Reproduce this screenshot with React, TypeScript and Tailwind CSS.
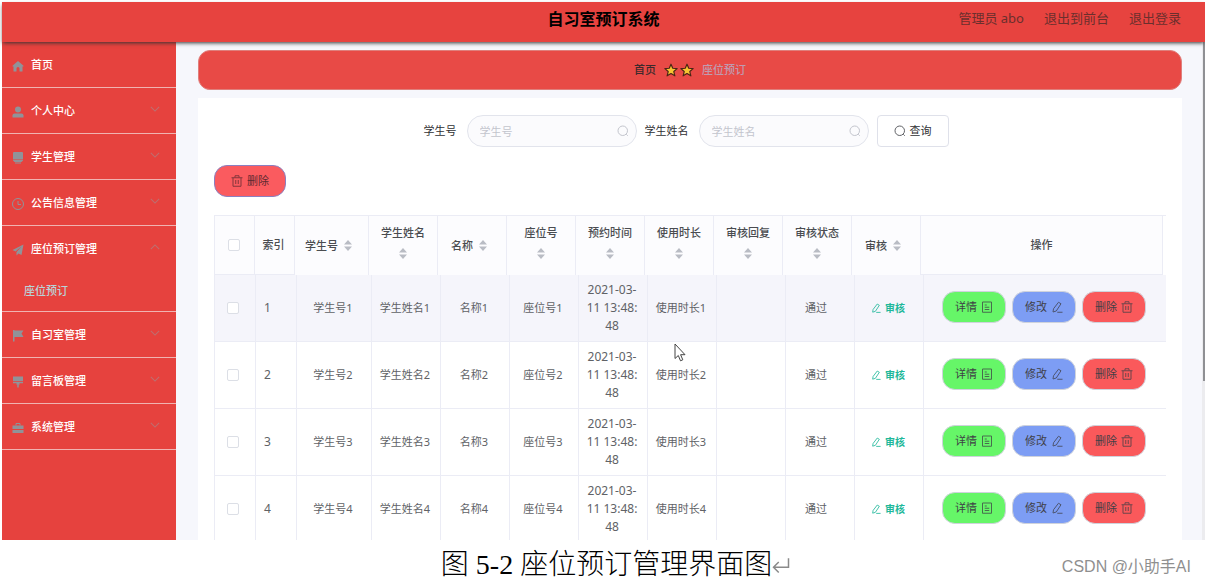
import { useState, type ReactNode } from "react";
import clsx from "clsx";

type IconProps = { className?: string };

function Icon({ className, children }: IconProps & { children: ReactNode }) {
  return (
    <svg
      viewBox="0 0 24 24"
      aria-hidden="true"
      fill="none"
      stroke="currentColor"
      className={clsx("shrink-0", className)}
    >
      {children}
    </svg>
  );
}

const menuIcons: Record<string, ReactNode> = {
  home: (
    <path d="M12 2 1 11.500V13h2v10h6v-6a3 3 0 0 1 6 0v6h6V13h2v-1.500z" fill="currentColor" stroke="none" />
  ),
  user: (
    <g fill="currentColor" stroke="none">
      <circle cx="12" cy="7" r="6" />
      <path d="M1 23v-4a4 4 0 0 1 4-4h14a4 4 0 0 1 4 4v4z" />
    </g>
  ),
  platform: (
    <g fill="currentColor" stroke="none">
      <path d="M4 0h16a2 2 0 0 1 2 2v13H2V2a2 2 0 0 1 2-2z" />
      <path d="M2 16h20v1l-3 3h-14l-3-3zM6 21h12v2H6z" />
    </g>
  ),
  clock: (
    <g strokeWidth="2">
      <circle cx="12" cy="12" r="11" />
      <path d="M12 6v7h6" />
    </g>
  ),
  send: (
    <path d="M23 1 1 12l6 3L19 5 9 16v7l4-4 6 3z" fill="currentColor" stroke="none" />
  ),
  flag: (
    <path d="M2 0h3v1h18l-4 6 4 7H5v9H2z" fill="currentColor" stroke="none" />
  ),
  board: (
    <g fill="currentColor" stroke="none">
      <path d="M2 1h20v9H2zM2 11.500h20v3h-7v3h-6v-3H2z" />
      <path d="M10.500 17h3v6h-3z" />
    </g>
  ),
  briefcase: (
    <g>
      <path d="M8 7V3h8v4" strokeWidth="2" />
      <path d="M1 7h22v7H1zM1 16h22v6H1z" fill="currentColor" stroke="none" />
    </g>
  ),
};

function SearchIcon({ className }: IconProps) {
  return (
    <Icon className={className}>
      <circle cx="11.500" cy="11.500" r="9.500" strokeWidth="2" />
      <path d="m18.500 18.500 3 3" strokeWidth="2" />
    </Icon>
  );
}

function TrashIcon({ className }: IconProps) {
  return (
    <Icon className={className}>
      <path d="M1 5.500h22M8 5V1.500h8V5M4 5.500V22.500h16V5.500M9.500 10v8M14.500 10v8" strokeWidth="2" />
    </Icon>
  );
}

function PencilIcon({ className }: IconProps) {
  return (
    <Icon className={className}>
      <path d="M15 2.500 20 5.500 10.500 20 4 22l1-6.500zM12.500 22.500H23" strokeWidth="2" />
    </Icon>
  );
}

function DocumentIcon({ className }: IconProps) {
  return (
    <Icon className={className}>
      <path d="M3 2h18v20.500H3zM7.500 8h4M7.500 12.500h9M7.500 17h9" strokeWidth="2" />
    </Icon>
  );
}

function StarIcon() {
  return (
    <Icon className="h-3.5 w-3.5">
      <path
        d="m12 2 3 7 7.500.6-5.700 5 1.800 7.400-6.600-4-6.600 4 1.800-7.400-5.700-5L9 9z"
        fill="#f7c531"
        stroke="#4a2415"
        strokeWidth="2"
        strokeLinejoin="round"
      />
    </Icon>
  );
}

function SortCaret() {
  return (
    <svg viewBox="0 0 8 11" aria-hidden="true" className="h-[11px] w-2 shrink-0 fill-[#b9bcc4]">
      <path d="M4 0 8 4.500H0zM4 11 0 6.500h8z" />
    </svg>
  );
}

const menu = [
  { label: "首页", icon: "home" },
  { label: "个人中心", icon: "user", arrow: true },
  { label: "学生管理", icon: "platform", arrow: true },
  { label: "公告信息管理", icon: "clock", arrow: true },
  { label: "座位预订管理", icon: "send", arrow: true, children: ["座位预订"] },
  { label: "自习室管理", icon: "flag", arrow: true },
  { label: "留言板管理", icon: "board", arrow: true },
  { label: "系统管理", icon: "briefcase", arrow: true },
];

const sortColumns = [
  { label: "学生号" },
  { label: "学生姓名", stacked: true },
  { label: "名称" },
  { label: "座位号", stacked: true },
  { label: "预约时间", stacked: true },
  { label: "使用时长", stacked: true },
  { label: "审核回复", stacked: true },
  { label: "审核状态", stacked: true },
  { label: "审核" },
];

const rows = [1, 2, 3, 4].map((n) => ({
  id: n,
  studentNo: `学生号${n}`,
  studentName: `学生姓名${n}`,
  name: `名称${n}`,
  seat: `座位号${n}`,
  time: ["2021-03-", "11 13:48:", "48"],
  duration: `使用时长${n}`,
  reply: "",
  status: "通过",
}));

const checkboxClass =
  "block mx-auto h-3 w-3 appearance-none rounded-xs border border-[#dcdfe6] bg-white checked:bg-blue-400";
const cellClass = "border-r border-b border-[#ebecf5] py-1.5 pl-1 text-center";
const actionClass =
  "flex h-8 w-16 items-center justify-center gap-1 rounded-[13px] border border-[#cfd3dc] text-[#3f3f46]";

function Sidebar() {
  return (
    <nav className="w-[174px] shrink-0 bg-[#e6423e] text-[11px] font-medium text-white">
      <ul>
        {menu.map((item) => (
          <li key={item.label} className="border-b border-[#f0b3b1]">
            <a href="#" className="flex h-[45px] items-center gap-[7px] pt-0.5 pr-4 pl-2.5">
              <Icon className="h-3 w-3 text-[#909399]">{menuIcons[item.icon]}</Icon>
              <span className="flex-1">{item.label}</span>
              {item.arrow && (
                <Icon className="mb-1.5 h-2.5 w-2.5 text-[#bd6f70]">
                  <path d={item.children ? "m2 17 10-10 10 10" : "m2 7 10 10L22 7"} strokeWidth="2.500" />
                </Icon>
              )}
            </a>
            {item.children?.map((child) => (
              <a key={child} href="#" className="flex h-10 items-center pl-[22px] text-[#b9d3d8]">
                {child}
              </a>
            ))}
          </li>
        ))}
      </ul>
    </nav>
  );
}

function SearchField({ id, label }: { id: string; label: string }) {
  const [value, setValue] = useState("");
  return (
    <div className="flex items-center gap-2.5">
      <label htmlFor={id} className="text-[#303133]">
        {label}
      </label>
      <div className="relative">
        <input
          id={id}
          value={value}
          onChange={(e) => setValue(e.target.value)}
          placeholder={label}
          className="block h-8 w-[170px] rounded-2xl border border-[#e2e4ec] bg-[#fbfbfd] pr-7 pl-3 outline-none placeholder:text-[#c3c5cd]"
        />
        <SearchIcon className="absolute top-2.5 right-2 h-3 w-3 text-[#c3c5cd]" />
      </div>
    </div>
  );
}

function ReservationTable() {
  return (
    <div className="mt-[18px] border-t border-l border-[#ebecf5] text-[11px] leading-[18px] text-[#606266]">
      {/* header is a table of its own, a little narrower than the body */}
      <div className="pr-[3px]">
        <table className="w-full table-fixed border-separate border-spacing-0 bg-[#fcfcfe]">
          <colgroup>
            <col className="w-10" />
            <col className="w-10" />
            <col className="w-[74px]" />
            <col span={8} className="w-[69px]" />
            <col />
          </colgroup>
          <thead className="text-[#4a4c50]">
            <tr className="h-[59px]">
              <th className="border-r border-b border-[#ebecf5] pr-0.5">
                <input type="checkbox" aria-label="全选" className={checkboxClass} />
              </th>
              <th className="border-r border-b border-[#ebecf5] pr-0.5 font-medium">索引</th>
              {sortColumns.map((col) => (
                <th key={col.label} className="border-r border-[#ebecf5] font-medium">
                  <span
                    className={clsx(
                      "flex items-center justify-center gap-1.5",
                      col.stacked ? "flex-col pb-2" : "pr-1.5"
                    )}
                  >
                    {col.label}
                    <SortCaret />
                  </span>
                </th>
              ))}
              <th className="border-r border-b border-[#ebecf5] font-medium">操作</th>
            </tr>
          </thead>
        </table>
      </div>
      <table className="w-full table-fixed border-separate border-spacing-0">
        <colgroup>
          <col className="w-[41px]" />
          <col className="w-[41px]" />
          <col className="w-[75px]" />
          <col span={8} className="w-[69px]" />
          <col />
        </colgroup>
        <tbody>
          {rows.map((row, i) => (
            <tr key={row.id} className={i === 0 ? "bg-[#f5f5fb]" : "hover:bg-[#f5f5fb]"}>
              <td className={clsx(cellClass, "pr-2")}>
                <input type="checkbox" aria-label={`选择 ${row.id}`} className={checkboxClass} />
              </td>
              <td className="border-r border-b border-[#ebecf5] pl-2 text-[12px]">{row.id}</td>
              <td className={clsx(cellClass, "pr-1.5")}>{row.studentNo}</td>
              <td className={clsx(cellClass, "pr-1.5")}>{row.studentName}</td>
              <td className={clsx(cellClass, "pr-1.5")}>{row.name}</td>
              <td className={clsx(cellClass, "pr-1.5")}>{row.seat}</td>
              <td className={clsx(cellClass, "pr-1.5 text-[12px]")}>
                {row.time.map((part) => (
                  <span key={part} className="block">
                    {part}
                  </span>
                ))}
              </td>
              <td className={clsx(cellClass, "pr-1.5")}>{row.duration}</td>
              <td className={clsx(cellClass, "pr-1.5")}>{row.reply}</td>
              <td className={clsx(cellClass, "pr-3")}>{row.status}</td>
              <td className={clsx(cellClass, "pr-1.5")}>
                <button className="inline-flex items-center gap-1 text-[10px] font-bold text-[#1fb89a]">
                  <PencilIcon className="h-2.5 w-2.5" />
                  审核
                </button>
              </td>
              <td className="border-b border-[#ebecf5]">
                <div className="flex justify-center gap-1.5 pr-0.5 pb-0.5">
                  <button className={clsx(actionClass, "bg-[#66f668]")}>
                    详情
                    <DocumentIcon className="h-3 w-3 opacity-75" />
                  </button>
                  <button className={clsx(actionClass, "bg-[#7d9df4]")}>
                    修改
                    <PencilIcon className="h-3 w-3 opacity-75" />
                  </button>
                  <button className={clsx(actionClass, "bg-[#fa595b]")}>
                    删除
                    <TrashIcon className="h-3 w-3 opacity-75" />
                  </button>
                </div>
              </td>
            </tr>
          ))}
        </tbody>
      </table>
    </div>
  );
}

export default function App() {
  return (
    <div className="flex h-screen flex-col bg-white font-['Noto_Sans','Noto_Sans_CJK_SC',sans-serif]">
      <div className="flex min-h-0 flex-1 flex-col overflow-hidden pt-0.5 pl-0.5">
        <header className="relative z-10 grid h-10 shrink-0 grid-cols-[1fr_auto_1fr] items-center bg-[#e7433f] pr-6 pb-1.5 shadow-[0_2px_4px_-1px_#333333]">
          <h1 className="col-start-2 pl-6 text-base font-bold text-black">自习室预订系统</h1>
          <div className="flex justify-end gap-5 text-[13px] text-[#6b2f2d]">
            <span>管理员 abo</span>
            <a href="#">退出到前台</a>
            <a href="#">退出登录</a>
          </div>
        </header>

        <div className="flex min-h-0 flex-1">
          <Sidebar />
          <main className="min-w-0 flex-1 overflow-hidden bg-[#f6f7fc] pt-2 pr-5 pl-[22px] text-[11px]">
            <div className="flex h-10 items-center justify-center gap-2 rounded-xl border border-[#df7f7c] bg-[#e84a46]">
              <a href="#" className="font-medium text-[#3c2a2c]">
                首页
              </a>
              <span className="flex gap-0.5">
                <StarIcon />
                <StarIcon />
              </span>
              <span className="font-medium text-[#bf9bb0]">座位预订</span>
            </div>

            <section className="mt-2 bg-white px-4 pt-[17px]">
              <form className="flex justify-center gap-2 pr-2" onSubmit={(e) => e.preventDefault()}>
                <SearchField id="student-no" label="学生号" />
                <SearchField id="student-name" label="学生姓名" />
                <button
                  type="submit"
                  className="flex h-8 w-[72px] items-center justify-center gap-1 rounded-sm border border-[#dfe1ea] text-[#303133]"
                >
                  <SearchIcon className="h-3 w-3 text-[#606266]" />
                  查询
                </button>
              </form>

              <button className="mt-[18px] flex h-8 w-[72px] items-center justify-center gap-1 rounded-[13px] border border-[#8b7fc0] bg-[#fa5b5f] text-[#5e2a30]">
                <TrashIcon className="h-3 w-3 opacity-75" />
                删除
              </button>

              <ReservationTable />
            </section>
          </main>
          <div className="w-[3px] shrink-0 bg-[#ececef]">
            <div className="ml-px h-[68%] bg-[#8f9094]" />
          </div>
        </div>
      </div>

      <footer className="relative flex h-[45px] shrink-0 items-center justify-center pt-1 pl-[26px]">
        <p className="font-['Liberation_Serif','Noto_Sans_CJK_SC',serif] text-[28px] leading-10 font-light text-black">
          图 <span className="font-normal">5-2</span> 座位预订管理界面图
        </p>
        <Icon className="h-[18px] w-[18px] text-[#8a8a8a]">
          <path d="M22 3v12H2M9 8l-7 7 7 7" strokeWidth="2" />
        </Icon>
        <span className="absolute right-3.5 bottom-1.5 font-['Liberation_Sans','Noto_Sans_CJK_SC',sans-serif] text-base text-[#8f8f8f]">
          CSDN @小助手AI
        </span>
      </footer>

      {/* mouse pointer */}
      <svg viewBox="0 0 12 19" aria-hidden="true" className="pointer-events-none absolute top-[343px] left-[674px] h-[19px] w-3">
        <path d="M1 1v14.500l3.300-3 2.200 5.300 2.300-1-2.200-5.100H11z" fill="#fff" stroke="#444" />
      </svg>
    </div>
  );
}
